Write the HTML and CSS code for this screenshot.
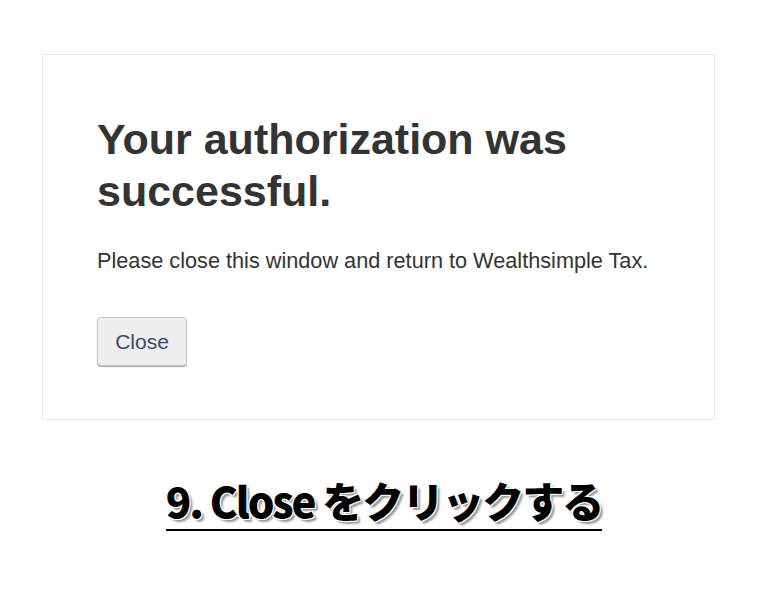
FILE: index.html
```html
<!DOCTYPE html>
<html lang="en">
<head>
    <meta charset="UTF-8">
    <meta name="viewport" content="width=device-width, initial-scale=1.0">
    <title>Authorization</title>
    <link rel="stylesheet" href="styles.css">
</head>
<body>
    <div class="panel">
        <h1>Your authorization was successful.</h1>
        <p>Please close this window and return to Wealthsimple Tax.</p>
        <button class="close-btn">Close</button>
    </div>

    <div class="caption">
        <span>9. Close をクリックする</span>
    </div>
</body>
</html>
```

FILE: styles.css
```css
body {
    margin: 0;
    padding: 54px 0 0;
    background-color: #fff;
    font-family: 'Liberation Sans', Arial, sans-serif;
    color: #333;
}
.panel {
    margin-left: 42px;
    width: 673px;
    height: 366px;
    box-sizing: border-box;
    border: 1px solid #e8e8e8;
    padding: 58px 54px 0 54px;
}
.panel h1 {
    margin: 0;
    font-size: 43px;
    line-height: 52px;
    font-weight: bold;
    color: #333;
    width: 480px;
}
.panel p {
    margin: 30px 0 0;
    font-size: 21.7px;
    line-height: 28px;
    color: #333;
}
.close-btn {
    margin-top: 42px;
    width: 90px;
    height: 49px;
    font-family: 'Liberation Sans', Arial, sans-serif;
    font-size: 21px;
    color: #3b4a6b;
    background-color: #eeeeee;
    border: 1px solid #c8c8c8;
    border-radius: 4px;
    box-shadow: 0 1px 1px rgba(0, 0, 0, 0.35);
    padding: 0;
}
.caption {
    text-align: center;
    margin-top: 56px;
}
.caption span {
    display: inline-block;
    font-family: 'Noto Sans CJK JP', sans-serif;
    font-weight: 900;
    font-size: 42px;
    line-height: 48px;
    color: #000;
    letter-spacing: -2px;
    border-bottom: 2px solid #000;
    padding-bottom: 5px;
    box-shadow: 1px 2px 1px -1px rgba(0, 0, 0, 0.15);
    text-shadow: -1px -1px 0 #fff, 1px -1px 0 #fff, -1px 1px 0 #fff, 1px 1px 0 #fff, 3px 3px 2px #999;
}
```
